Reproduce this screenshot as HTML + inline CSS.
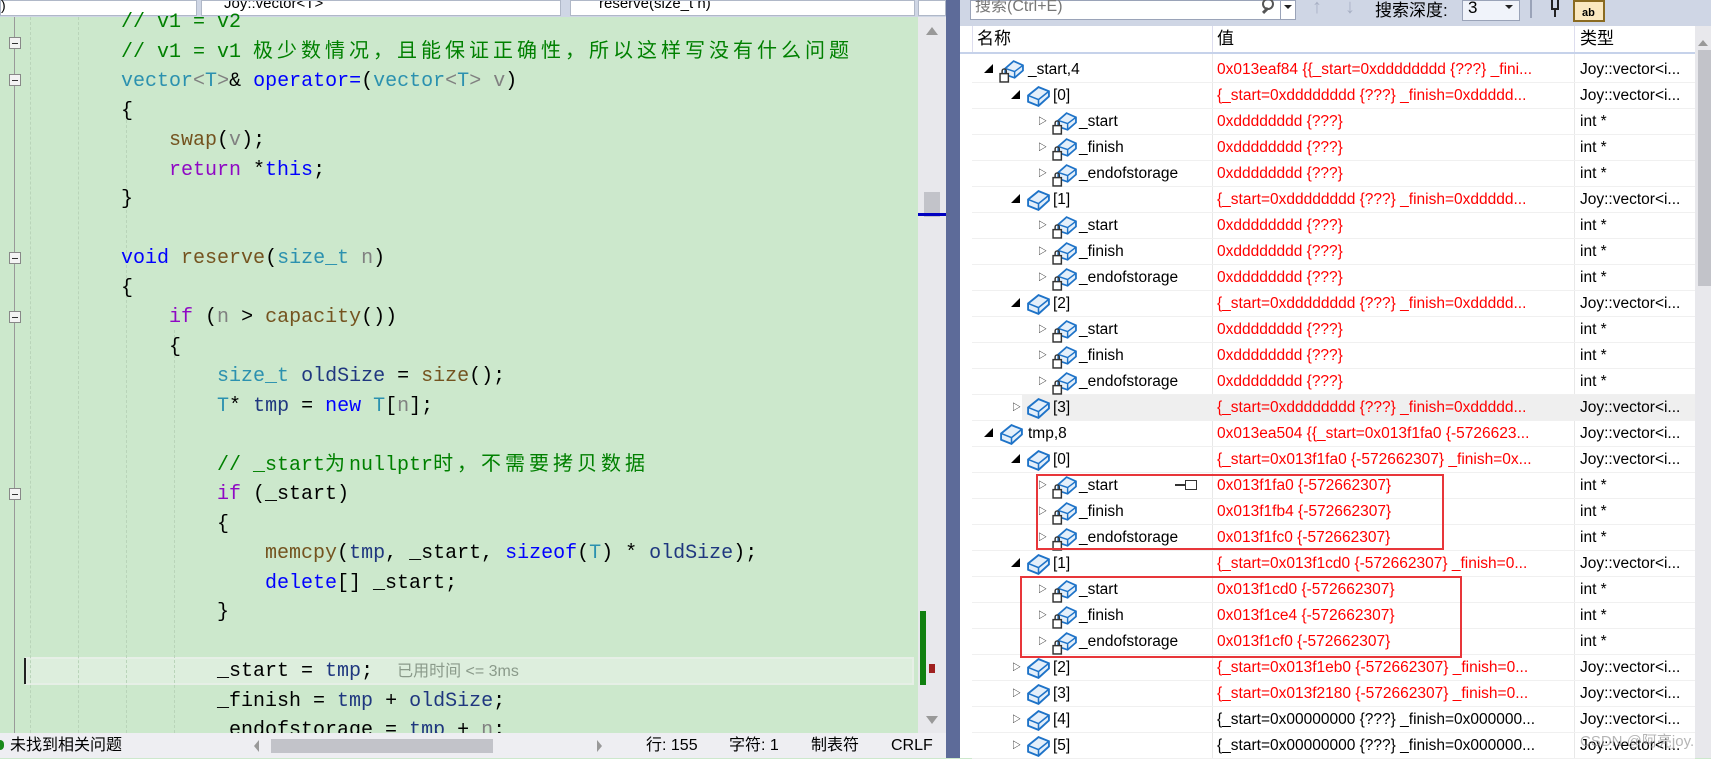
<!DOCTYPE html>
<html><head><meta charset="utf-8"><style>
*{margin:0;padding:0;box-sizing:border-box}
body{width:1711px;height:758px;overflow:hidden;position:relative;background:#cce8cc;font-family:"Liberation Sans","Noto Sans CJK SC",sans-serif}
.a{position:absolute}
.code{position:absolute;left:0;top:8px;width:918px;font-family:"Liberation Mono","Noto Sans CJK SC",monospace;font-size:20px;line-height:29.5px;color:#000}
.code div{height:29.5px;white-space:pre;padding-left:73px}
.cj{letter-spacing:4px}
.c{color:#008000}.t{color:#2b91af}.k{color:#0000ff}.p{color:#8f08c4}.f{color:#74531f}.g{color:#808080}.v{color:#1f377f}
.row{position:absolute;left:972px;width:723px;height:26px;border-bottom:1px solid #f0f0f0;font-size:15.5px;line-height:25px;white-space:nowrap}
.row span{position:absolute;top:0}
.val{left:245px;color:#ff0000;width:360px;overflow:hidden}
.typ{left:608px}
.arr{font-size:9px}
.box{position:absolute;border:2.5px solid #e8363a}
.fold{position:absolute;left:9px;width:12px;height:12px;border:1px solid #888;background:#f3f3f3}
.fold:after{content:"";position:absolute;left:2px;top:4.5px;width:6px;height:1.5px;background:#333}
</style></head><body>
<svg width="0" height="0" style="position:absolute"><defs>
<symbol id="ic" viewBox="0 0 24 24"><path d="M2 11 L12 3 L22 7 L22 12 L12 21 L2 17 Z" fill="#e4effa" stroke="#1e73c8" stroke-width="1.8"/><path d="M2 11 L12 15 L22 7 M12 15 L12 21" fill="none" stroke="#1e73c8" stroke-width="1.5"/></symbol>
<symbol id="icl" viewBox="0 0 24 24"><path d="M6 10 L14 3 L23 7 L23 12 L15 19 L6 16 Z" fill="#e4effa" stroke="#1e73c8" stroke-width="1.7"/><path d="M6 10 L15 13 L23 7 M15 13 L15 19" fill="none" stroke="#1e73c8" stroke-width="1.4"/><rect x="1" y="15" width="8" height="8" fill="#fff" stroke="#333" stroke-width="1.4"/><path d="M3 15 V12.5 A2 2 0 0 1 7 12.5 V15" fill="none" stroke="#333" stroke-width="1.4"/></symbol>
</defs></svg>

<div class="a" style="left:0;top:0;width:946px;height:17px;background:#cfd6e5"></div>
<div class="a" style="left:0;top:0;width:197px;height:16px;background:#fff;border:1px solid #b0b8c8;font-size:14px;line-height:8px">)</div>
<div class="a" style="left:201px;top:0;height:16px;background:#fff;border:1px solid #b0b8c8;width:360px;font-size:15px;line-height:6px;padding-left:22px;overflow:hidden">Joy::vector&lt;T&gt;</div>
<div class="a" style="left:570px;top:0;width:345px;height:16px;background:#fff;border:1px solid #b0b8c8;font-size:15px;line-height:6px;padding-left:28px;overflow:hidden">reserve(size_t n)</div>
<div class="a" style="left:918px;top:0;width:28px;height:16px;background:#fff;border:1px solid #b0b8c8"></div>

<div class="a" style="left:25px;top:657px;width:889px;height:28px;background:#ddeedd;border:2px solid #e6efe6"></div>
<div class="a" style="left:24px;top:658px;width:2px;height:26px;background:#222"></div>

<div class="a" style="left:14px;top:17px;width:1px;height:716px;background:#999"></div>
<div class="fold" style="top:37px"></div>
<div class="fold" style="top:74px"></div>
<div class="fold" style="top:252px"></div>
<div class="fold" style="top:311px"></div>
<div class="fold" style="top:488px"></div>
<div class="a" style="left:30px;top:17px;height:716px;border-left:1px dashed #b9d4b9"></div>
<div class="a" style="left:78px;top:17px;height:716px;border-left:1px dashed #b9d4b9"></div>
<div class="a" style="left:126px;top:110px;height:623px;border-left:1px dashed #b9d4b9"></div>
<div class="a" style="left:174px;top:330px;height:403px;border-left:1px dashed #b9d4b9"></div>

<div class="code">
<div class="c">    // v1 = v2</div>
<div class="c">    // v1 = v1 <span class="cj">极少数情况，且能保证正确性，所以这样写没有什么问题</span></div>
<div>    <span class="t">vector</span><span class="g">&lt;</span><span class="t">T</span><span class="g">&gt;</span>&amp; <span class="k">operator=</span>(<span class="t">vector</span><span class="g">&lt;</span><span class="t">T</span><span class="g">&gt;</span> <span class="g">v</span>)</div>
<div>    {</div>
<div>        <span class="f">swap</span>(<span class="g">v</span>);</div>
<div>        <span class="p">return</span> *<span class="k">this</span>;</div>
<div>    }</div>
<div> </div>
<div>    <span class="k">void</span> <span class="f">reserve</span>(<span class="t">size_t</span> <span class="g">n</span>)</div>
<div>    {</div>
<div>        <span class="p">if</span> (<span class="g">n</span> &gt; <span class="f">capacity</span>())</div>
<div>        {</div>
<div>            <span class="t">size_t</span> <span class="v">oldSize</span> = <span class="f">size</span>();</div>
<div>            <span class="t">T</span>* <span class="v">tmp</span> = <span class="k">new</span> <span class="t">T</span>[<span class="g">n</span>];</div>
<div> </div>
<div class="c">            // _start<span class="cj">为</span>nullptr<span class="cj">时，不需要拷贝数据</span></div>
<div>            <span class="p">if</span> (_start)</div>
<div>            {</div>
<div>                <span class="f">memcpy</span>(<span class="v">tmp</span>, _start, <span class="k">sizeof</span>(<span class="t">T</span>) * <span class="v">oldSize</span>);</div>
<div>                <span class="k">delete</span>[] _start;</div>
<div>            }</div>
<div> </div>
<div>            _start = <span class="v">tmp</span>;  <span style="color:#8a9a8a;font-family:'Liberation Sans','Noto Sans CJK SC',sans-serif;font-size:16px">已用时间 &lt;= 3ms</span></div>
<div>            _finish = <span class="v">tmp</span> + <span class="v">oldSize</span>;</div>
<div>            _endofstorage = <span class="v">tmp</span> + <span class="g">n</span>;</div>
</div>

<div class="a" style="left:918px;top:17px;width:28px;height:716px;background:#e8e8ec"></div>
<div class="a" style="left:926px;top:27px;border-left:6px solid transparent;border-right:6px solid transparent;border-bottom:8px solid #999"></div>
<div class="a" style="left:926px;top:716px;border-left:6px solid transparent;border-right:6px solid transparent;border-top:8px solid #999"></div>
<div class="a" style="left:924px;top:192px;width:16px;height:25px;background:#c2c3c9"></div>
<div class="a" style="left:918px;top:213px;width:28px;height:3px;background:#0000c0"></div>
<div class="a" style="left:920px;top:611px;width:6px;height:74px;background:#108010"></div>
<div class="a" style="left:929px;top:664px;width:6px;height:9px;background:#a02020"></div>
<div class="a" style="left:946px;top:0;width:14px;height:758px;background:#5d6b99"></div>

<div class="a" style="left:0;top:733px;width:946px;height:25px;background:#eeeef2;font-size:16px;line-height:25px;white-space:nowrap">
<span class="a" style="left:-4px;top:7px;width:8px;height:10px;border-radius:5px;background:#1a8a1a"></span>
<span class="a" style="left:10px">未找到相关问题</span>
<span class="a" style="left:254px;top:7px;border-top:6px solid transparent;border-bottom:6px solid transparent;border-right:5px solid #999"></span>
<span class="a" style="left:271px;top:6px;width:222px;height:14px;background:#c2c3c9"></span>
<span class="a" style="left:597px;top:7px;border-top:6px solid transparent;border-bottom:6px solid transparent;border-left:5px solid #999"></span>
<span class="a" style="left:646px">行: 155</span>
<span class="a" style="left:729px">字符: 1</span>
<span class="a" style="left:811px">制表符</span>
<span class="a" style="left:891px">CRLF</span>
</div>

<div class="a" style="left:960px;top:0;width:751px;height:758px;background:#fff"></div>
<div class="a" style="left:960px;top:0;width:751px;height:26px;background:#cfd6e5"></div>
<div class="a" style="left:970px;top:0;width:326px;height:20px;background:#fff;border:1px solid #9aa3b8;font-size:16px;line-height:12px;color:#777;padding-left:4px">搜索(Ctrl+E)</div>
<div class="a" style="left:1262px;top:-2px;width:12px;height:12px;border:2px solid #555;border-radius:50%"></div>
<div class="a" style="left:1262px;top:9px;width:7px;height:3px;background:#555;transform:rotate(-45deg)"></div>
<div class="a" style="left:1280px;top:0;width:16px;height:20px;border-left:1px solid #9aa3b8"></div>
<div class="a" style="left:1284px;top:5px;border-left:4px solid transparent;border-right:4px solid transparent;border-top:4px solid #222"></div>
<div class="a" style="left:1312px;top:-4px;font-size:20px;color:#a8b0c4">↑</div>
<div class="a" style="left:1345px;top:-4px;font-size:20px;color:#a8b0c4">↓</div>
<div class="a" style="left:1375px;top:-4px;font-size:17px">搜索深度:</div>
<div class="a" style="left:1462px;top:0;width:58px;height:21px;background:#f0f3fa;border:1px solid #9aa3b8;font-size:17px;line-height:14px;padding-left:5px">3</div>
<div class="a" style="left:1505px;top:5px;border-left:4px solid transparent;border-right:4px solid transparent;border-top:4px solid #222"></div>
<div class="a" style="left:1530px;top:0;width:2px;height:18px;background:#9aa3b8"></div>
<div class="a" style="left:1551px;top:0;width:8px;height:10px;border:2px solid #222;border-top:none"></div>
<div class="a" style="left:1554px;top:10px;width:2px;height:7px;background:#222"></div>
<div class="a" style="left:1573px;top:0;width:32px;height:22px;background:#fbe8c0;border:2px solid #8a6a20;font-size:11px;font-weight:bold;padding:5px 0 0 7px">ab</div>

<div class="a" style="left:960px;top:26px;width:751px;height:28px;border-bottom:2px solid #c6d2ea;font-size:17px;line-height:26px">
<span class="a" style="left:17px">名称</span><span class="a" style="left:257px">值</span><span class="a" style="left:620px">类型</span>
<span class="a" style="left:12px;top:0;width:1px;height:26px;background:#dde"></span>
<span class="a" style="left:252px;top:0;width:1px;height:26px;background:#dde"></span>
<span class="a" style="left:614px;top:0;width:1px;height:26px;background:#dde"></span>
</div>
<div class="a" style="left:1212px;top:54px;width:1px;height:704px;background:#e8e8e8"></div>
<div class="a" style="left:1574px;top:54px;width:1px;height:704px;background:#e8e8e8"></div>
<div class="a" style="left:1695px;top:26px;width:16px;height:732px;background:#e8e8ec"></div>
<div class="a" style="left:1698px;top:40px;border-left:5px solid transparent;border-right:5px solid transparent;border-bottom:6px solid #999"></div>
<div class="a" style="left:1698px;top:50px;width:13px;height:236px;background:#c2c3c9"></div>

<div class="a" style="left:1022px;top:395px;width:673px;height:26px;background:#efefef"></div>

<div style="font-size:15.5px">
<div class="row" style="top:57px"><span style="left:12px" class="arr">◢</span><svg class="a" style="left:27px;top:1px" width="25" height="25"><use href="#icl"/></svg><span style="left:56px">_start,4</span><span class="val">0x013eaf84 {{_start=0xdddddddd {???} _fini...</span><span class="typ">Joy::vector&lt;i...</span></div>
<div class="row" style="top:83px"><span style="left:39px" class="arr">◢</span><svg class="a" style="left:54px;top:1px" width="25" height="25"><use href="#ic"/></svg><span style="left:81px">[0]</span><span class="val">{_start=0xdddddddd {???} _finish=0xddddd...</span><span class="typ">Joy::vector&lt;i...</span></div>
<div class="row" style="top:109px"><span style="left:66px" class="arr">▷</span><svg class="a" style="left:80px;top:1px" width="25" height="25"><use href="#icl"/></svg><span style="left:107px">_start</span><span class="val">0xdddddddd {???}</span><span class="typ">int *</span></div>
<div class="row" style="top:135px"><span style="left:66px" class="arr">▷</span><svg class="a" style="left:80px;top:1px" width="25" height="25"><use href="#icl"/></svg><span style="left:107px">_finish</span><span class="val">0xdddddddd {???}</span><span class="typ">int *</span></div>
<div class="row" style="top:161px"><span style="left:66px" class="arr">▷</span><svg class="a" style="left:80px;top:1px" width="25" height="25"><use href="#icl"/></svg><span style="left:107px">_endofstorage</span><span class="val">0xdddddddd {???}</span><span class="typ">int *</span></div>
<div class="row" style="top:187px"><span style="left:39px" class="arr">◢</span><svg class="a" style="left:54px;top:1px" width="25" height="25"><use href="#ic"/></svg><span style="left:81px">[1]</span><span class="val">{_start=0xdddddddd {???} _finish=0xddddd...</span><span class="typ">Joy::vector&lt;i...</span></div>
<div class="row" style="top:213px"><span style="left:66px" class="arr">▷</span><svg class="a" style="left:80px;top:1px" width="25" height="25"><use href="#icl"/></svg><span style="left:107px">_start</span><span class="val">0xdddddddd {???}</span><span class="typ">int *</span></div>
<div class="row" style="top:239px"><span style="left:66px" class="arr">▷</span><svg class="a" style="left:80px;top:1px" width="25" height="25"><use href="#icl"/></svg><span style="left:107px">_finish</span><span class="val">0xdddddddd {???}</span><span class="typ">int *</span></div>
<div class="row" style="top:265px"><span style="left:66px" class="arr">▷</span><svg class="a" style="left:80px;top:1px" width="25" height="25"><use href="#icl"/></svg><span style="left:107px">_endofstorage</span><span class="val">0xdddddddd {???}</span><span class="typ">int *</span></div>
<div class="row" style="top:291px"><span style="left:39px" class="arr">◢</span><svg class="a" style="left:54px;top:1px" width="25" height="25"><use href="#ic"/></svg><span style="left:81px">[2]</span><span class="val">{_start=0xdddddddd {???} _finish=0xddddd...</span><span class="typ">Joy::vector&lt;i...</span></div>
<div class="row" style="top:317px"><span style="left:66px" class="arr">▷</span><svg class="a" style="left:80px;top:1px" width="25" height="25"><use href="#icl"/></svg><span style="left:107px">_start</span><span class="val">0xdddddddd {???}</span><span class="typ">int *</span></div>
<div class="row" style="top:343px"><span style="left:66px" class="arr">▷</span><svg class="a" style="left:80px;top:1px" width="25" height="25"><use href="#icl"/></svg><span style="left:107px">_finish</span><span class="val">0xdddddddd {???}</span><span class="typ">int *</span></div>
<div class="row" style="top:369px"><span style="left:66px" class="arr">▷</span><svg class="a" style="left:80px;top:1px" width="25" height="25"><use href="#icl"/></svg><span style="left:107px">_endofstorage</span><span class="val">0xdddddddd {???}</span><span class="typ">int *</span></div>
<div class="row" style="top:395px"><span style="left:40px" class="arr">▷</span><svg class="a" style="left:54px;top:1px" width="25" height="25"><use href="#ic"/></svg><span style="left:81px">[3]</span><span class="val">{_start=0xdddddddd {???} _finish=0xddddd...</span><span class="typ">Joy::vector&lt;i...</span></div>
<div class="row" style="top:421px"><span style="left:12px" class="arr">◢</span><svg class="a" style="left:27px;top:1px" width="25" height="25"><use href="#ic"/></svg><span style="left:56px">tmp,8</span><span class="val">0x013ea504 {{_start=0x013f1fa0 {-5726623...</span><span class="typ">Joy::vector&lt;i...</span></div>
<div class="row" style="top:447px"><span style="left:39px" class="arr">◢</span><svg class="a" style="left:54px;top:1px" width="25" height="25"><use href="#ic"/></svg><span style="left:81px">[0]</span><span class="val">{_start=0x013f1fa0 {-572662307} _finish=0x...</span><span class="typ">Joy::vector&lt;i...</span></div>
<div class="row" style="top:473px"><span style="left:66px" class="arr">▷</span><svg class="a" style="left:80px;top:1px" width="25" height="25"><use href="#icl"/></svg><span style="left:107px">_start</span><span style="left:213px;top:7px;width:12px;height:10px;border:1.5px solid #333"></span><span style="left:203px;top:11px;width:10px;height:1.5px;background:#333"></span><span class="val">0x013f1fa0 {-572662307}</span><span class="typ">int *</span></div>
<div class="row" style="top:499px"><span style="left:66px" class="arr">▷</span><svg class="a" style="left:80px;top:1px" width="25" height="25"><use href="#icl"/></svg><span style="left:107px">_finish</span><span class="val">0x013f1fb4 {-572662307}</span><span class="typ">int *</span></div>
<div class="row" style="top:525px"><span style="left:66px" class="arr">▷</span><svg class="a" style="left:80px;top:1px" width="25" height="25"><use href="#icl"/></svg><span style="left:107px">_endofstorage</span><span class="val">0x013f1fc0 {-572662307}</span><span class="typ">int *</span></div>
<div class="row" style="top:551px"><span style="left:39px" class="arr">◢</span><svg class="a" style="left:54px;top:1px" width="25" height="25"><use href="#ic"/></svg><span style="left:81px">[1]</span><span class="val">{_start=0x013f1cd0 {-572662307} _finish=0...</span><span class="typ">Joy::vector&lt;i...</span></div>
<div class="row" style="top:577px"><span style="left:66px" class="arr">▷</span><svg class="a" style="left:80px;top:1px" width="25" height="25"><use href="#icl"/></svg><span style="left:107px">_start</span><span class="val">0x013f1cd0 {-572662307}</span><span class="typ">int *</span></div>
<div class="row" style="top:603px"><span style="left:66px" class="arr">▷</span><svg class="a" style="left:80px;top:1px" width="25" height="25"><use href="#icl"/></svg><span style="left:107px">_finish</span><span class="val">0x013f1ce4 {-572662307}</span><span class="typ">int *</span></div>
<div class="row" style="top:629px"><span style="left:66px" class="arr">▷</span><svg class="a" style="left:80px;top:1px" width="25" height="25"><use href="#icl"/></svg><span style="left:107px">_endofstorage</span><span class="val">0x013f1cf0 {-572662307}</span><span class="typ">int *</span></div>
<div class="row" style="top:655px"><span style="left:40px" class="arr">▷</span><svg class="a" style="left:54px;top:1px" width="25" height="25"><use href="#ic"/></svg><span style="left:81px">[2]</span><span class="val">{_start=0x013f1eb0 {-572662307} _finish=0...</span><span class="typ">Joy::vector&lt;i...</span></div>
<div class="row" style="top:681px"><span style="left:40px" class="arr">▷</span><svg class="a" style="left:54px;top:1px" width="25" height="25"><use href="#ic"/></svg><span style="left:81px">[3]</span><span class="val">{_start=0x013f2180 {-572662307} _finish=0...</span><span class="typ">Joy::vector&lt;i...</span></div>
<div class="row" style="top:707px"><span style="left:40px" class="arr">▷</span><svg class="a" style="left:54px;top:1px" width="25" height="25"><use href="#ic"/></svg><span style="left:81px">[4]</span><span class="val" style="color:#000">{_start=0x00000000 {???} _finish=0x000000...</span><span class="typ">Joy::vector&lt;i...</span></div>
<div class="row" style="top:733px"><span style="left:40px" class="arr">▷</span><svg class="a" style="left:54px;top:1px" width="25" height="25"><use href="#ic"/></svg><span style="left:81px">[5]</span><span class="val" style="color:#000">{_start=0x00000000 {???} _finish=0x000000...</span><span class="typ">Joy::vector&lt;i...</span></div>
</div>

<div class="box" style="left:1036px;top:474px;width:408px;height:76px"></div>
<div class="box" style="left:1020px;top:576px;width:442px;height:82px"></div>
<div class="a" style="left:1580px;top:730px;font-size:15px;color:rgba(150,150,150,0.7)">CSDN @阿亮joy.</div>
</body></html>
